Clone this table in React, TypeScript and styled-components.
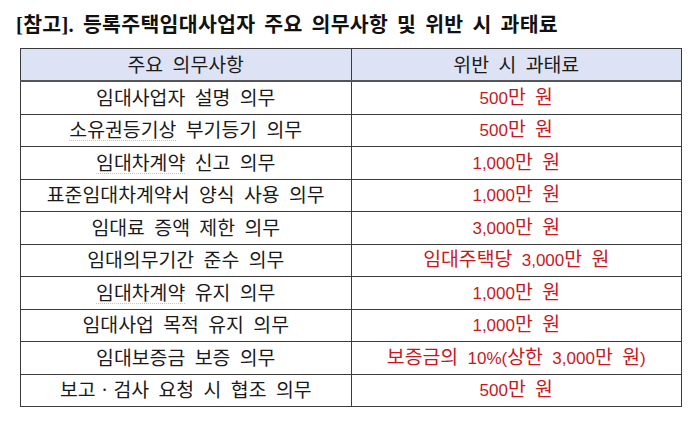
import React from 'react';
import styled, { createGlobalStyle } from 'styled-components';

type Duty = {
  name: string;
  fine: string;
  marked?: string;
};

const duties: Duty[] = [
  { name: '임대사업자 설명 의무', fine: '500만 원' },
  { name: '부기등기 의무', fine: '500만 원', marked: '소유권등기상' },
  { name: '신고 의무', fine: '1,000만 원', marked: '임대차계약' },
  { name: '표준임대차계약서 양식 사용 의무', fine: '1,000만 원' },
  { name: '임대료 증액 제한 의무', fine: '3,000만 원' },
  { name: '임대의무기간 준수 의무', fine: '임대주택당 3,000만 원' },
  { name: '유지 의무', fine: '1,000만 원', marked: '임대차계약' },
  { name: '임대사업 목적 유지 의무', fine: '1,000만 원' },
  { name: '임대보증금 보증 의무', fine: '보증금의 10%(상한 3,000만 원)' },
  { name: '보고ㆍ검사 요청 시 협조 의무', fine: '500만 원' },
];

// numbers in the hwp table are set smaller than the hangul around them
const renderFine = (text: string) =>
  text.split(/([0-9,%()]+)/).map((part, i) =>
    /^[0-9,%()]+$/.test(part) ? <Num key={i}>{part}</Num> : <React.Fragment key={i}>{part}</React.Fragment>,
  );

const GlobalStyle = createGlobalStyle`
  html, body {
    margin: 0;
    padding: 0;
    background: #ffffff;
  }
`;

const App: React.FC = () => {
  return (
    <>
      <GlobalStyle />
      <Page>
        <Title>[참고]. 등록주택임대사업자 주요 의무사항 및 위반 시 과태료</Title>
        <Table>
          <thead>
            <tr>
              <HeadCell>주요 의무사항</HeadCell>
              <HeadCell>위반 시 과태료</HeadCell>
            </tr>
          </thead>
          <tbody>
            {duties.map((d) => (
              <tr key={d.name + d.fine}>
                <Cell>
                  {d.marked && (
                    <>
                      <Marked>{d.marked}</Marked>{' '}
                    </>
                  )}
                  {d.name}
                </Cell>
                <Cell $red>{renderFine(d.fine)}</Cell>
              </tr>
            ))}
          </tbody>
        </Table>
      </Page>
    </>
  );
};

export default App;

const Page = styled.div`
  width: 700px;
  height: 422px;
  box-sizing: border-box;
  padding: 12px 0 0 16px;
  display: flex;
  flex-direction: column;
  gap: 10px;
  font-family: 'Liberation Sans', 'Noto Sans CJK KR', sans-serif;
`;

const Title = styled.div`
  font-family: 'Liberation Serif', 'Noto Sans CJK KR', serif;
  font-size: 20.5px;
  font-weight: 700;
  line-height: 26px;
  color: #111111;
  word-spacing: 3.5px;
  letter-spacing: 0.3px;
`;

const Table = styled.table`
  margin-left: 4px;
  width: 662px;
  border-collapse: collapse;
  table-layout: fixed;
  border: 1px solid #3a3a3a;
`;

const HeadCell = styled.th`
  height: 31px;
  padding: 0;
  background: #dde3f5;
  border: 1px solid #3a3a3a;
  border-bottom: 2px solid #555555;
  font-size: 19.4px;
  font-weight: 400;
  line-height: 24px;
  color: #1a1a1a;
  text-align: center;
  word-spacing: 4px;
`;

const Cell = styled.td<{ $red?: boolean }>`
  height: 31.5px;
  padding: 0;
  border: 1px solid #3a3a3a;
  font-size: 19.4px;
  line-height: 24px;
  color: ${(p) => (p.$red ? '#c8181e' : '#1a1a1a')};
  text-align: center;
  word-spacing: 4px;
`;

const Num = styled.span`
  font-size: 17px;
`;

const Marked = styled.span`
  text-decoration: underline dotted #e8bc98;
  text-decoration-thickness: 1px;
  text-underline-offset: 3px;
`;
